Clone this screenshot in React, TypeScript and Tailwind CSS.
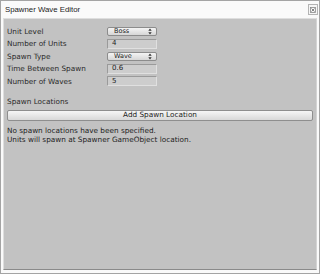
import React from 'react';

const font = { fontFamily: '"DejaVu Sans", Verdana, sans-serif' };

const Arrows = () => (
  <svg width="4" height="7" viewBox="0 0 4 7">
    <path d="M0.3 2.8 L2 0.6 L3.7 2.8 Z" fill="#333" />
    <path d="M0.3 4.2 L2 6.4 L3.7 4.2 Z" fill="#333" />
  </svg>
);

const Dropdown: React.FC<{ value: string }> = ({ value }) => (
  <div className="flex h-[9px] w-[50px] items-center justify-between rounded-[2px] border border-[#8c8c8c] bg-gradient-to-b from-[#f4f4f4] to-[#d6d6d6] pl-[6px] pr-[4px] text-[6.5px] leading-none text-[#222]">
    <span>{value}</span>
    <Arrows />
  </div>
);

const Field: React.FC<{ value: string }> = ({ value }) => (
  <div className="flex h-[10px] w-[50px] items-center border border-[#9a9a9a] border-b-[#e0e0e0] border-r-[#e0e0e0] bg-[#cdcdcd] pl-[4px] text-[7px] leading-none text-[#222]">
    {value}
  </div>
);

const Row: React.FC<{ label: string; children: React.ReactNode }> = ({ label, children }) => (
  <div className="flex h-[12.5px] items-center">
    <div className="w-[100px] text-[7.3px] leading-none text-[#2a2a2a]">{label}</div>
    {children}
  </div>
);

export default function App() {
  return (
    <div className="h-[274px] w-[320px] bg-white" style={font}>
      <div className="flex h-full w-full flex-col border border-[#a4a4a4] bg-[#fafafa]">
        <div className="flex h-[17px] items-center justify-between pl-[4px] pr-[1px]">
          <span
            className="text-[7.8px] text-[#1a1a1a]"
            style={{ fontFamily: '"Liberation Sans", Arial, sans-serif' }}
          >
            Spawner Wave Editor
          </span>
          <div className="flex h-[11px] w-[10px] items-center justify-center border border-[#b4b4b4] bg-[#f6f6f6]">
            <svg width="6" height="6" viewBox="0 0 6 6">
              <rect x="0.5" y="0.5" width="5" height="5" fill="none" stroke="#888" strokeWidth="0.8" />
              <path d="M1.5 1.5 L4.5 4.5 M4.5 1.5 L1.5 4.5" stroke="#666" strokeWidth="0.8" />
            </svg>
          </div>
        </div>
        <div className="mx-[2px] mb-[3px] flex-1 border border-[#dedede] border-b-[#8a8a8a] border-r-[#d4d4d4] bg-[#c2c2c2] pl-[3px] pr-[3px] pt-[6px]">
          <Row label="Unit Level">
            <Dropdown value="Boss" />
          </Row>
          <Row label="Number of Units">
            <Field value="4" />
          </Row>
          <Row label="Spawn Type">
            <Dropdown value="Wave" />
          </Row>
          <Row label="Time Between Spawn">
            <Field value="0.6" />
          </Row>
          <Row label="Number of Waves">
            <Field value="5" />
          </Row>
          <div className="mt-[9px] h-[10px] text-[7.3px] leading-[10px] text-[#2a2a2a]">Spawn Locations</div>
          <div className="mt-[3px] flex h-[11px] items-center justify-center rounded-[2px] border border-[#8e8e8e] bg-gradient-to-b from-[#f6f6f6] to-[#d8d8d8] text-[7.3px] leading-none text-[#1e1e1e]">
            Add Spawn Location
          </div>
          <div className="mt-[5px] text-[7.3px] leading-[9px] text-[#222]">
            <div>No spawn locations have been specified.</div>
            <div>Units will spawn at Spawner GameObject location.</div>
          </div>
        </div>
      </div>
    </div>
  );
}
